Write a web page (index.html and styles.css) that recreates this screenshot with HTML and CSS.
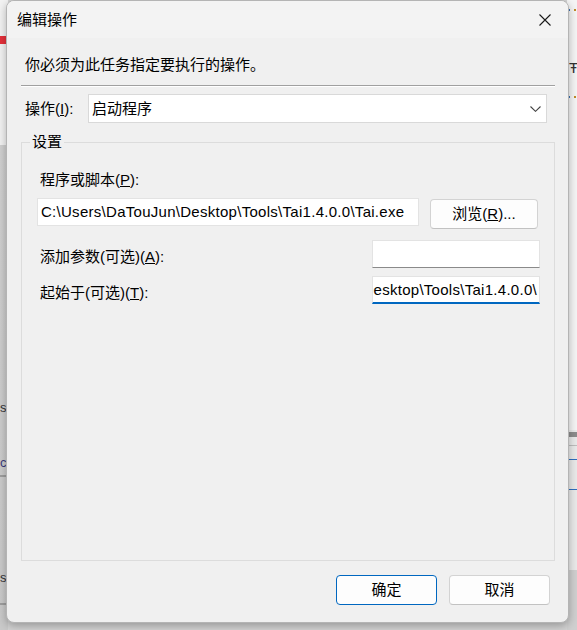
FILE: index.html
```html
<!DOCTYPE html>
<html lang="zh-CN">
<head>
    <meta charset="UTF-8">
    <meta name="viewport" content="width=device-width, initial-scale=1.0">
    <title>编辑操作</title>
    <link rel="stylesheet" href="styles.css">
</head>
<body>
    <!-- window behind the dialog -->
    <div class="back">
        <div class="back-l">
            <i class="mark"></i>
            <i class="band b1"></i>
            <i class="band b2"></i>
            <span class="frag f1">s</span>
            <span class="frag f2">c</span>
            <span class="frag f3">s</span>
        </div>
        <div class="back-r">
            <i class="dots d1"></i>
            <span class="frag f4">Ŧ</span>
            <i class="dots d2"></i>
            <i class="band b3"></i>
            <i class="line l1"></i>
            <i class="line l2"></i>
            <i class="band b4"></i>
        </div>
    </div>

    <div class="dialog">
        <div class="titlebar">
            <span class="title">编辑操作</span>
            <span class="close">
                <svg width="12" height="12" viewBox="0 0 12 12">
                    <path d="M0.5 0.5L11.5 11.5M11.5 0.5L0.5 11.5" stroke="#1a1a1a" stroke-width="1.1" fill="none"/>
                </svg>
            </span>
        </div>
        <div class="content">
            <p class="intro">你必须为此任务指定要执行的操作。</p>
            <div class="rule"></div>
            <div class="action-row">
                <label class="action-label">操作(<u>I</u>):</label>
                <div class="combo">
                    <span>启动程序</span>
                    <svg width="11" height="6" viewBox="0 0 11 6">
                        <path d="M0.5 0.5L5.5 5.3L10.5 0.5" stroke="#444" stroke-width="1.1" fill="none"/>
                    </svg>
                </div>
            </div>
            <fieldset class="settings">
                <legend>设置</legend>
                <label class="field-label">程序或脚本(<u>P</u>):</label>
                <div class="program-row">
                    <div class="textbox wide">C:\Users\DaTouJun\Desktop\Tools\Tai1.4.0.0\Tai.exe</div>
                    <button class="btn browse">浏览(<u>R</u>)...</button>
                </div>
                <div class="opt-row">
                    <label class="field-label">添加参数(可选)(<u>A</u>):</label>
                    <div class="textbox short"></div>
                </div>
                <div class="opt-row next">
                    <label class="field-label">起始于(可选)(<u>T</u>):</label>
                    <div class="textbox short focus"><span>C:\Users\DaTouJun\Desktop\Tools\Tai1.4.0.0\</span></div>
                </div>
            </fieldset>
            <div class="footer">
                <button class="btn primary">确定</button>
                <button class="btn">取消</button>
            </div>
        </div>
    </div>
</body>
</html>
```

FILE: styles.css
```css
*{
    margin: 0;
    padding: 0;
    box-sizing: border-box;
}
html,body{
    width: 577px;
    height: 630px;
    overflow: hidden;
}
body{
    position: relative;
    background: #d3d3d3;
    font-family: "Liberation Sans", "Noto Sans CJK SC", sans-serif;
    font-size: 15px;
    line-height: 20px;
    color: #000;
}

/* window behind */
.back{
    position: absolute;
    left: 0;
    top: 0;
    width: 100%;
    height: 100%;
}
.back-l{
    position: absolute;
    left: 0;
    top: 0;
    width: 8px;
    height: 100%;
    background: linear-gradient(#f2f2f2 0, #f2f2f2 145px, #d0d0d0 145px, #c9c9c9 100%);
}
.back-r{
    position: absolute;
    right: 0;
    top: 0;
    width: 10px;
    height: 100%;
    background: linear-gradient(#f4f4f4 0, #f4f4f4 430px, #e9e9e9 430px, #e9e9e9 570px, #cfcfcf 570px);
}
.back i,.back span{
    position: absolute;
}
.mark{
    left: 0;
    top: 36px;
    width: 6px;
    height: 8px;
    background: #e4303a;
}
.band{
    left: 0;
    width: 100%;
    height: 2px;
    background: #9e9e9e;
}
.b1{ top: 475px; }
.b2{ top: 603px; }
.b3{ top: 432px; height: 5px; background: #8c8c8c; }
.b4{ top: 445px; height: 1px; background: #bdbdbd; }
.line{
    left: 0;
    width: 100%;
    height: 1px;
    background: #2d6fbf;
}
.l1{ top: 459px; }
.l2{ top: 489px; }
.dots{
    left: 1px;
    width: 8px;
    height: 2px;
    border-left: 2px solid #3a6fb0;
    border-right: 2px solid #c08a2a;
}
.d1{ top: 9px; }
.d2{ top: 96px; }
.frag{
    left: 0;
    font-size: 13px;
    color: #333;
}
.f1{ top: 398px; }
.f2{ top: 453px; color: #3a3a7a; }
.f3{ top: 568px; }
.f4{ left: 2px; top: 58px; font-size: 15px; }

/* dialog */
.dialog{
    position: absolute;
    left: 6px;
    top: 0;
    width: 563px;
    height: 623px;
    background: #f0f0f0;
    border: 1px solid #b4b4b4;
    border-radius: 8px;
    box-shadow: 0 3px 8px rgba(0,0,0,.28);
    overflow: hidden;
}
.titlebar{
    display: flex;
    align-items: center;
    justify-content: space-between;
    height: 37px;
    padding-left: 10px;
    background: #f3f3f3;
}
.close{
    display: flex;
    align-items: center;
    justify-content: center;
    width: 38px;
    height: 37px;
    margin-right: 4px;
}
.content{
    padding: 0 13px 0 14px;
}
.intro{
    margin-top: 17px;
    padding-left: 4px;
}
.rule{
    height: 2px;
    margin-top: 10px;
    border-top: 1px solid #a0a0a0;
    border-bottom: 1px solid #fff;
}
.action-row{
    display: flex;
    align-items: center;
    margin-top: 7px;
    padding-left: 4px;
    padding-right: 8px;
}
.action-label{
    flex: 0 0 63px;
}
.combo{
    flex: 1;
    display: flex;
    align-items: center;
    justify-content: space-between;
    height: 29px;
    padding: 0 5px 0 3px;
    background: #fff;
    border: 1px solid #d9d9d9;
}

.settings{
    margin-top: 9px;
    height: 429px;
    padding: 18px 16px 0 15px;
    border: 1px solid #dcdcdc;
}
.settings legend{
    margin-left: -7px;
    padding: 0 2px;
}
.field-label{
    display: block;
    padding-left: 3px;
}
.program-row{
    display: flex;
    align-items: flex-start;
    margin-top: 8px;
}
.textbox{
    height: 28px;
    padding: 3px 3px 0;
    background: #fff;
    border: 1px solid #e3e3e3;
    white-space: nowrap;
    letter-spacing: 0.28px;
    overflow: hidden;
}
.wide{
    width: 382px;
}
.short{
    width: 168px;
    margin-right: -2px;
    border-bottom-color: #8a8a8a;
}
.focus{
    display: flex;
    justify-content: flex-end;
    padding-right: 2px;
    border-bottom: 2px solid #0067c0;
}
.opt-row{
    display: flex;
    align-items: center;
    justify-content: space-between;
    margin-top: 11px;
}
.opt-row .field-label{
    padding-top: 5px;
}
.opt-row.next{
    margin-top: 8px;
}

.btn{
    height: 30px;
    width: 101px;
    font: inherit;
    color: #000;
    background: #fdfdfd;
    border: 1px solid #d3d3d3;
    border-bottom-color: #c2c2c2;
    border-radius: 4px;
}
.browse{
    width: 108px;
    margin-top: 1px;
    margin-left: auto;
}
.primary{
    border: 1px solid #0067c0;
}
.footer{
    display: flex;
    justify-content: flex-end;
    gap: 12px;
    margin-top: 14px;
    padding-right: 5px;
}
```
